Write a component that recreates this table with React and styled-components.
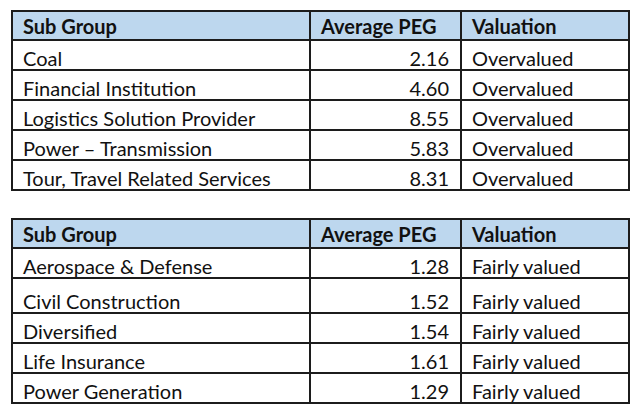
import React from "react";
import styled, { createGlobalStyle } from "styled-components";

const GlobalStyle = createGlobalStyle`
  body {
    margin: 0;
    background: #fff;
    font-family: Lato, "Open Sans", sans-serif;
    color: #111;
  }
`;

const overvalued = [
  ["Coal", "2.16"],
  ["Financial Institution", "4.60"],
  ["Logistics Solution Provider", "8.55"],
  ["Power – Transmission", "5.83"],
  ["Tour, Travel Related Services", "8.31"],
];

const fairly = [
  ["Aerospace & Defense", "1.28"],
  ["Civil Construction", "1.52", true],
  ["Diversified", "1.54"],
  ["Life Insurance", "1.61"],
  ["Power Generation", "1.29"],
];

function PegTable({ rows, label }) {
  return (
    <Table>
      <colgroup>
        <col style={{ width: 298 }} />
        <col style={{ width: 151 }} />
        <col style={{ width: 168 }} />
      </colgroup>
      <thead>
        <HeadRow>
          <HeadCell>Sub Group</HeadCell>
          <HeadCell>Average PEG</HeadCell>
          <HeadCell>Valuation</HeadCell>
        </HeadRow>
      </thead>
      <tbody>
        {rows.map(([name, peg, tall]) => (
          <Row key={name} $tall={tall}>
            <Cell>{name}</Cell>
            <NumCell>{peg}</NumCell>
            <Cell>{label}</Cell>
          </Row>
        ))}
      </tbody>
    </Table>
  );
}

export default function App() {
  return (
    <Page>
      <GlobalStyle />
      <PegTable rows={overvalued} label="Overvalued" />
      <PegTable rows={fairly} label="Fairly valued" />
    </Page>
  );
}

const Page = styled.div`
  display: flex;
  flex-direction: column;
  gap: 27px;
  padding: 10px 0 0 11px;
`;

const Table = styled.table`
  border-collapse: collapse;
  table-layout: fixed;
  width: 617px;
  border: 2px solid #1c1c1c;
  font-size: 20px;
  line-height: 22px;
`;

const HeadRow = styled.tr`
  height: 29px;
  background: #bdd7ee;
`;

const Row = styled.tr`
  height: ${(p) => (p.$tall ? "34.5px" : "30px")};
`;

const HeadCell = styled.th`
  border: 2px solid #1c1c1c;
  padding: 0 10px;
  text-align: left;
  font-weight: 700;
  vertical-align: middle;
`;

const Cell = styled.td`
  border: 2px solid #1c1c1c;
  padding: 2px 10px 0;
  text-align: left;
  vertical-align: bottom;
  white-space: nowrap;
`;

const NumCell = styled(Cell)`
  text-align: right;
  padding-right: 11px;
`;
